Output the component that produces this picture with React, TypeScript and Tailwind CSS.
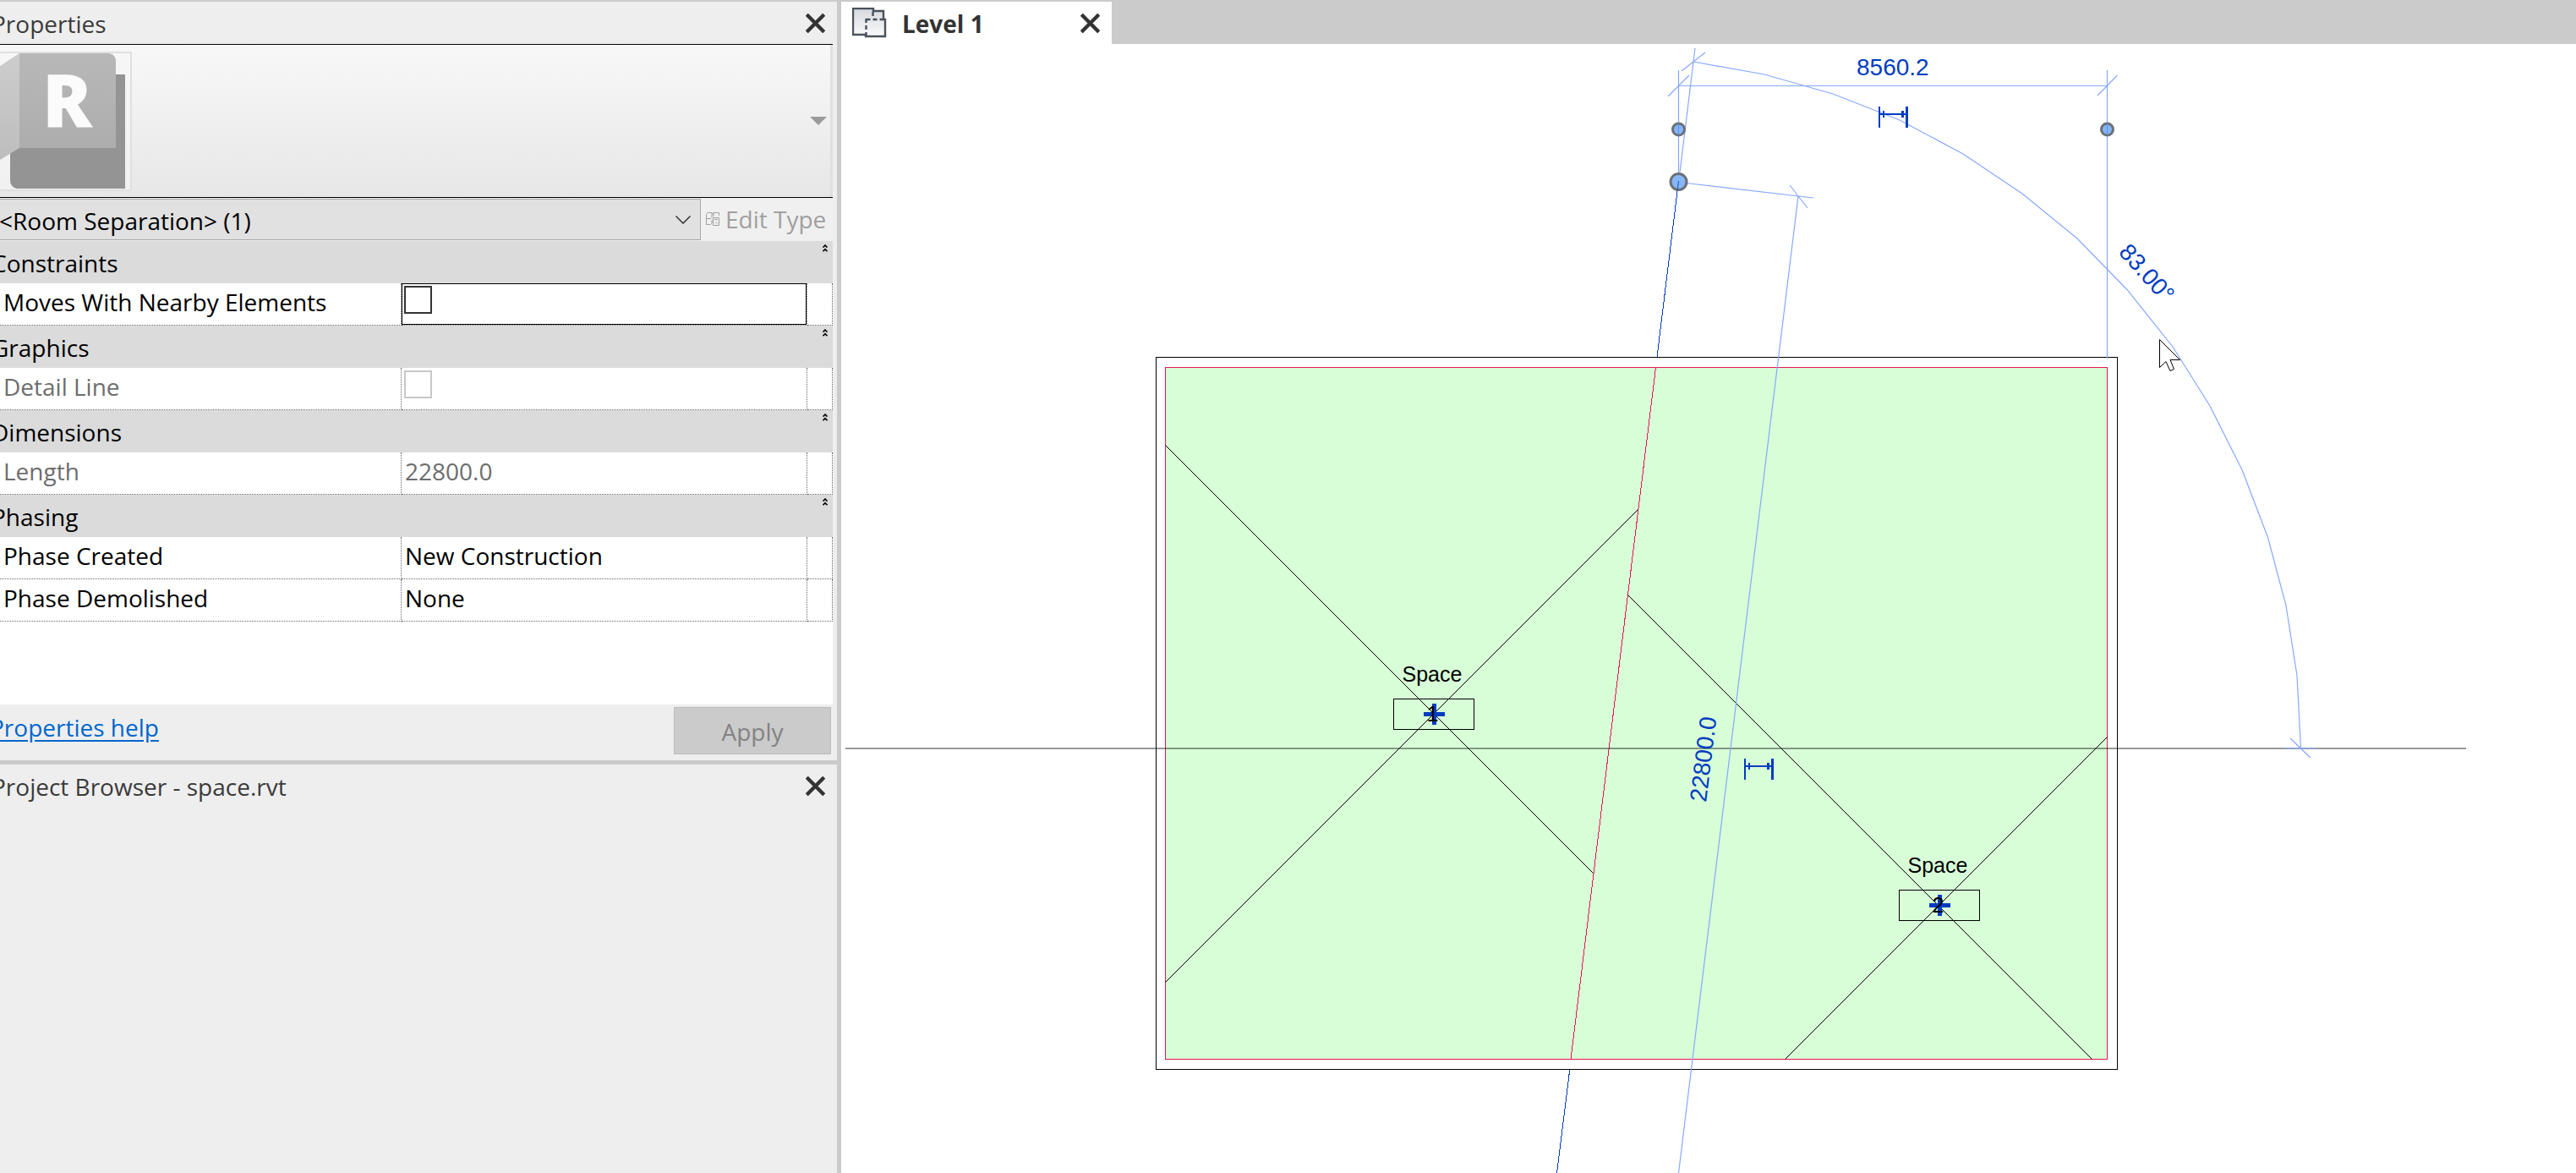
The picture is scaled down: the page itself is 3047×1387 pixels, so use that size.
import { useState } from "react";
import type { ReactNode } from "react";

interface PropertyRow {
  id: string;
  label: string;
  value: string | boolean;
  readOnly?: boolean;
}

interface PropertyGroup {
  title: string;
  rows: PropertyRow[];
}

const GROUPS: PropertyGroup[] = [
  { title: "Constraints", rows: [{ id: "moves", label: "Moves With Nearby Elements", value: false }] },
  { title: "Graphics", rows: [{ id: "detail", label: "Detail Line", value: false, readOnly: true }] },
  { title: "Dimensions", rows: [{ id: "length", label: "Length", value: "22800.0", readOnly: true }] },
  {
    title: "Phasing",
    rows: [
      { id: "created", label: "Phase Created", value: "New Construction" },
      { id: "demolished", label: "Phase Demolished", value: "None" },
    ],
  },
];

const ARC_POINTS =
  "2003,73 2087,88 2168,111 2247,142 2322,182 2392,229 2457,282 2516,342.5 2570,410 2614,480 2652,555.5 2682.5,635.5 2704,716 2717,799 2721.5,885";

function CloseButton({ label }: { label: string }) {
  return (
    <button aria-label={label} className="flex size-[23px] shrink-0 items-center justify-center">
      <svg viewBox="0 0 23 23" className="size-full" fill="none" stroke="#333" strokeWidth="4.4">
        <path d="M1.2 1.2 21.8 21.8M21.8 1.2 1.2 21.8" />
      </svg>
    </button>
  );
}

function PanelHeader({ title }: { title: string }) {
  return (
    <div className="flex h-[50px] items-center justify-between pr-3.5 text-[#3a3a3a]">
      <h2 className="pt-0.5">{title}</h2>
      <CloseButton label={`Close ${title}`} />
    </div>
  );
}

function RevitLogo() {
  return (
    <svg width="156" height="165" viewBox="0 60 156 165">
      <defs>
        <linearGradient id="face" x1="0" y1="0" x2="0" y2="1">
          <stop offset="0" stopColor="#b8b8b8" />
          <stop offset="1" stopColor="#adadad" />
        </linearGradient>
        <linearGradient id="side" x1="0" y1="0" x2="0" y2="1">
          <stop offset="0" stopColor="#cdcdcd" />
          <stop offset="1" stopColor="#bdbdbd" />
        </linearGradient>
      </defs>
      <path d="M-2 61H155V224H-2" fill="#f7f7f7" fillOpacity=".6" stroke="#e0e0e0" strokeWidth="2" />
      <path d="M136 87H148V222H20Q12 220 12 212V172H136Z" fill="#949494" />
      <path d="M0 77 23 62V174L0 188Z" fill="url(#side)" />
      <path d="M23 62H129Q137 64 137 71V174H23Z" fill="url(#face)" />
      <text x="50" y="150" fontSize="87" fontWeight="800" fill="#fbfbfb" className="font-['Open_Sans',sans-serif]">
        R
      </text>
    </svg>
  );
}

function PropertyCell({ row }: { row: PropertyRow }) {
  const [checked, setChecked] = useState(row.value === true);

  if (typeof row.value === "string") {
    return <div className="pl-1 pb-1.5">{row.value}</div>;
  }
  return (
    <div
      className={
        row.readOnly
          ? "flex h-[49px] items-start border border-transparent p-0.5"
          : "flex h-[49px] items-start border border-black p-0.5"
      }
    >
      <input
        id={row.id}
        type="checkbox"
        checked={checked}
        disabled={row.readOnly}
        onChange={(e) => setChecked(e.target.checked)}
        className="size-[33px] appearance-none border-2 border-[#333] bg-white checked:bg-[#333] disabled:border-[#c8c8c8]"
      />
    </div>
  );
}

function PropertiesTable() {
  return (
    <table className="w-full table-fixed border-separate border-spacing-0">
      <colgroup>
        <col className="w-[485px]" />
        <col />
        <col className="w-[30px]" />
      </colgroup>
      {GROUPS.map((group) => (
        <tbody key={group.title}>
          <tr className="h-[50px] bg-[#dbdbdb]">
            <th colSpan={2} scope="colgroup" className="p-0 pt-0.5 text-left font-normal">
              {group.title}
            </th>
            <td className="p-0 align-top">
              <button aria-label={`Collapse ${group.title}`} className="ml-[18px] mt-1 block">
                <svg width="6" height="9" viewBox="0 0 6 9" fill="none" stroke="#000" strokeWidth="1.6">
                  <path d="M.5 3.6 3 1 5.5 3.6M.5 8.2 3 5.6 5.5 8.2" />
                </svg>
              </button>
            </td>
          </tr>
          {group.rows.map((row) => (
            <tr key={row.id} className={row.readOnly ? "h-[50px] text-[#6d6d6d]" : "h-[50px]"}>
              <td className="border-r border-b border-dotted border-[#666] p-0 pb-1.5 pl-3.5">
                <label htmlFor={typeof row.value === "boolean" ? row.id : undefined}>{row.label}</label>
              </td>
              <td className="border-r border-b border-dotted border-[#666] p-0">
                <PropertyCell row={row} />
              </td>
              <td className="border-r border-b border-dotted border-[#666] p-0" />
            </tr>
          ))}
        </tbody>
      ))}
    </table>
  );
}

function PropertiesPanel() {
  return (
    <section className="flex flex-col">
      <PanelHeader title="Properties" />
      <div className="flex flex-col pr-[5px]">
        <button
          aria-label="Type selector"
          className="flex h-[182px] items-center justify-between border-y border-black bg-linear-to-b from-[#f8f8f8] to-[#e7e7e7] pl-2.5 pr-[7px] shadow-[inset_-3px_0_0_#e0e0e0]"
        >
          <RevitLogo />
          <svg width="20" height="10" viewBox="0 0 20 10">
            <path d="M0 0H20L10 10Z" fill="#999c9b" />
          </svg>
        </button>
        <div className="flex h-[51px] items-stretch py-px">
          <div className="relative min-w-0 flex-1">
            <select
              aria-label="Element filter"
              className="size-full appearance-none border border-[#a9a9a9] bg-[#e1e1e1] pl-2 pt-0.5"
            >
              <option>&lt;Room Separation&gt; (1)</option>
            </select>
            <svg
              viewBox="0 0 18 10"
              className="pointer-events-none absolute right-3 top-5 h-2.5 w-[18px]"
              fill="none"
              stroke="#333"
              strokeWidth="1.5"
            >
              <path d="M.5.5 9 9 17.5.5" />
            </svg>
          </div>
          <button disabled className="flex w-[156px] items-center gap-1.5 bg-[#f0f0f0] pl-1.5 text-[#a0a0a0]">
            <svg width="17" height="17" viewBox="0 0 17 17" fill="none" stroke="#a0a0a0">
              <path d="M.5 2.5 2 .5H7V6.5M.5 2.5V7.5H6M9 5V.5H15.5V4M7.5 3 9 .5M.5 7.5V14.5H5.5L7 13V9" />
              <path d="M8.5 6.5H15.5V15.5H8.5ZM10 8.5H14" />
              <path d="M10.5 12H11.5M12.5 13.5H13.5M12.5 11.5H13.5" />
            </svg>
            <span className="pb-0.5">Edit Type</span>
          </button>
        </div>
        <div className="h-[548px] bg-white">
          <PropertiesTable />
        </div>
      </div>
      <div className="flex h-[66px] items-start justify-between pt-[3px] pr-[7px]">
        <a href="#help" className="-ml-0.5 pt-1.5 text-[#0066cc] underline underline-offset-4">
          Properties help
        </a>
        <button disabled className="h-14 w-[186px] border border-[#bcbcbc] bg-[#cbcbcb] pt-0.5 text-[#838383]">
          Apply
        </button>
      </div>
    </section>
  );
}

function LevelIcon() {
  return (
    <svg width="41" height="36" viewBox="0 0 41 36" fill="none" stroke="#4a525c" strokeWidth="2.4">
      <defs>
        <linearGradient id="sheet" x1="0" y1="0" x2="0" y2="1">
          <stop offset="0" stopColor="#d6d9e0" />
          <stop offset="1" stopColor="#fafafa" />
        </linearGradient>
      </defs>
      <path d="M1 1H25V4H37V14H39V34H16V32H1Z" fill="url(#sheet)" />
      <path d="M24.5 5V12M16.5 14H36" strokeDasharray="5 3" />
      <path d="M16.5 13V34" strokeDasharray="5 3" />
    </svg>
  );
}

function Handle({ x, y, r }: { x: number; y: number; r: number }) {
  return <circle cx={x} cy={y} r={r} fill="#85b6f8" stroke="#6b7075" strokeWidth="3" />;
}

// toggle that turns a temporary dimension into a permanent one
function DimensionToggle({ x, y }: { x: number; y: number }) {
  return (
    <path
      transform={`translate(${x} ${y})`}
      fill="#003cc0"
      d="M0 0H2V8H5V5H7V8H27V5H30V8H32V0H35V25H32V10H30V13H27V10H7V13H5V10H2V25H0Z"
    />
  );
}

interface SpaceTagProps {
  x: number;
  y: number;
  number: string;
}

function SpaceTag({ x, y, number }: SpaceTagProps) {
  return (
    <g>
      <rect x={x - 48} y={y - 18} width="95" height="36" fill="none" stroke="#000" shapeRendering="crispEdges" />
      <path d={`M${x - 12.5} ${y}H${x + 12.5}M${x} ${y - 12.5}V${y + 12.5}`} stroke="#003cc0" strokeWidth="5" />
      <text x={x - 38} y={y - 39} fontSize="25">
        Space
      </text>
      <text x={x - 9} y={y + 8} fontSize="25">
        {number}
      </text>
    </g>
  );
}

function DimensionText({ x, y, angle = 0, children }: { x: number; y: number; angle?: number; children: ReactNode }) {
  return (
    <text transform={`translate(${x} ${y}) rotate(${angle})`} fontSize="28" fill="#003cc0">
      {children}
    </text>
  );
}

function FloorPlan() {
  return (
    <svg
      viewBox="995 52 2052 1335"
      preserveAspectRatio="xMinYMin meet"
      className="block size-full font-['Liberation_Sans',Arial,sans-serif]"
      role="img"
      aria-label="Level 1 floor plan"
    >
      {/* walls and room boundary */}
      <g fill="none" shapeRendering="crispEdges">
        <rect x="1367.5" y="422.5" width="1137" height="842" stroke="#000" />
        <rect x="1378.5" y="434.5" width="1114" height="818" fill="#d8fed8" stroke="#ec1454" />
        <path d="M1958.5 434.5 1858 1252.5" stroke="#ec1454" />
        <path d="M1985.5 214 1960 422M1856.7 1265 1841.5 1387" stroke="#003cc0" />
      </g>

      {/* space reference lines */}
      <path
        d="M1378.5 526.5 1884.5 1032.5M1937.5 602.5 1378.5 1161.5M1925.5 703.5 2474.5 1252.5M2492.5 871.5 2111.5 1252.5"
        stroke="#000"
      />
      <path d="M1000 885H2917" stroke="#000" strokeOpacity=".4" strokeWidth="2" />

      <SpaceTag x={1696.5} y={844.5} number="1" />
      <SpaceTag x={2294.5} y={1070.5} number="2" />

      {/* temporary dimensions */}
      <g fill="none" stroke="#86a8ff" strokeWidth="1.2">
        <path d="M1985.5 101.5H2492.5M1985.5 83V205M2492.5 83V424" />
        <path d="M1973 114 1998 89M2481 113 2504.5 89M1989 84 2017 62" />
        <path d="M2005 57 1987 204" />
        <polyline points={ARC_POINTS} />
        <path d="M2709 873 2733 896M2703 885H2740" />
        <path d="M1995 216.5 2145 234M2117 219 2138 246M2127 232 1985.5 1387" />
      </g>

      <Handle x={1985.5} y={153} r={7} />
      <Handle x={2492.5} y={153} r={7} />
      <Handle x={1985.5} y={215} r={9.5} />
      <path d="M1985.5 146V160M2492.5 146V160" stroke="#5a8df0" />
      <path d="M1985.5 214 1984 226" stroke="#1c55b8" />

      <DimensionToggle x={2222} y={126} />
      <DimensionToggle x={2063} y={897} />
      <DimensionText x={2196} y={89}>8560.2</DimensionText>
      <DimensionText x={2505} y={299} angle={48}>83.00°</DimensionText>
      <DimensionText x={2018} y={949} angle={-83}>22800.0</DimensionText>

      <path
        d="M2554.5 401.5V434.5L2562 427.5 2567 438.5 2571.5 436.5 2567 425.5H2578.5Z"
        fill="#fff"
        stroke="#000"
      />
    </svg>
  );
}

export default function App() {
  return (
    <div className="flex h-screen min-h-[1100px] border-t-2 border-[#cbcbcb] bg-white font-['Open_Sans',sans-serif] text-[28px] leading-9 text-black">
      <aside className="w-[995px] shrink-0 overflow-hidden border-r-[5px] border-[#cbcbcb] bg-[#eee]">
        <div className="-ml-2.5 flex h-full flex-col">
          <PropertiesPanel />
          <section className="flex-1 border-t-[5px] border-[#cbcbcb]">
            <PanelHeader title="Project Browser - space.rvt" />
          </section>
        </div>
      </aside>
      <main className="flex min-w-0 flex-1 flex-col">
        <div className="flex h-[50px] bg-[#cbcbcb]">
          <div className="flex w-80 items-center bg-white pl-[13px] pr-3.5 text-[#333]">
            <LevelIcon />
            <span className="flex-1 pl-[18px] pt-0.5 font-bold">Level 1</span>
            <CloseButton label="Close Level 1" />
          </div>
        </div>
        <div className="min-h-0 flex-1">
          <FloorPlan />
        </div>
      </main>
    </div>
  );
}
